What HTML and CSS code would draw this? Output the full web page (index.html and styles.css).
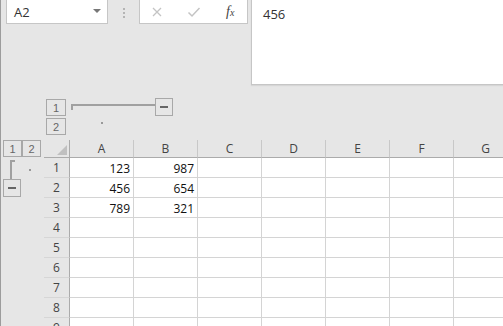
FILE: index.html
```html
<!DOCTYPE html>
<html lang="en">
<head>
    <meta charset="UTF-8">
    <title>Sheet</title>
    <link rel="stylesheet" href="styles.css">
</head>
<body>
<div class="app">

    <div class="formula-bar">
        <div class="name-box">
            <span>A2</span>
            <span class="caret"></span>
        </div>
        <div class="grip"><i></i><i></i><i></i></div>
        <div class="fx-box">
            <svg class="fx-icon" width="12" height="12" viewBox="0 0 12 12"><path d="M2 2 L10 10 M10 2 L2 10" stroke="#c4c4c4" stroke-width="1.3" fill="none"/></svg>
            <svg class="fx-icon" width="14" height="12" viewBox="0 0 14 12"><path d="M1.5 6.5 L5 10 L12.5 2" stroke="#c4c4c4" stroke-width="1.5" fill="none"/></svg>
            <span class="fx">f<sub>x</sub></span>
        </div>
        <div class="formula-input">456</div>
    </div>

    <div class="col-outline">
        <div class="levels">
            <div class="lvl">1</div>
            <div class="lvl">2</div>
        </div>
        <div class="col-group">
            <div class="col-group-top">
                <div class="col-line"></div>
                <div class="minus"></div>
            </div>
            <div class="detail-dot"></div>
        </div>
    </div>

    <div class="sheet">
        <div class="row-levels">
            <div class="lvl">1</div>
            <div class="lvl">2</div>
        </div>
        <div class="corner"></div>
        <div class="ch">A</div>
        <div class="ch">B</div>
        <div class="ch">C</div>
        <div class="ch">D</div>
        <div class="ch">E</div>
        <div class="ch">F</div>
        <div class="ch">G</div>

        <div class="row-group">
            <div class="row-group-top">
                <div class="row-line"></div>
                <div class="detail-dot"></div>
            </div>
            <div class="minus"></div>
        </div>
        <div class="rh">1</div>
        <div class="c num">123</div><div class="c num">987</div><div class="c"></div><div class="c"></div><div class="c"></div><div class="c"></div><div class="c"></div>
        <div class="rh">2</div>
        <div class="c num">456</div><div class="c num">654</div><div class="c"></div><div class="c"></div><div class="c"></div><div class="c"></div><div class="c"></div>

        <div class="ro"></div><div class="rh">3</div>
        <div class="c num">789</div><div class="c num">321</div><div class="c"></div><div class="c"></div><div class="c"></div><div class="c"></div><div class="c"></div>
        <div class="ro"></div><div class="rh">4</div>
        <div class="c"></div><div class="c"></div><div class="c"></div><div class="c"></div><div class="c"></div><div class="c"></div><div class="c"></div>
        <div class="ro"></div><div class="rh">5</div>
        <div class="c"></div><div class="c"></div><div class="c"></div><div class="c"></div><div class="c"></div><div class="c"></div><div class="c"></div>
        <div class="ro"></div><div class="rh">6</div>
        <div class="c"></div><div class="c"></div><div class="c"></div><div class="c"></div><div class="c"></div><div class="c"></div><div class="c"></div>
        <div class="ro"></div><div class="rh">7</div>
        <div class="c"></div><div class="c"></div><div class="c"></div><div class="c"></div><div class="c"></div><div class="c"></div><div class="c"></div>
        <div class="ro"></div><div class="rh">8</div>
        <div class="c"></div><div class="c"></div><div class="c"></div><div class="c"></div><div class="c"></div><div class="c"></div><div class="c"></div>
        <div class="ro"></div><div class="rh">9</div>
        <div class="c"></div><div class="c"></div><div class="c"></div><div class="c"></div><div class="c"></div><div class="c"></div><div class="c"></div>
    </div>

</div>
</body>
</html>
```

FILE: styles.css
```css
html, body {
    margin: 0;
    padding: 0;
    height: 100%;
    overflow: hidden;
    background-color: #e6e6e6;
    font-family: "Open Sans", "Liberation Sans", sans-serif;
}

.app {
    border-left: 1px solid #9c9c9c;
    height: 100%;
    box-sizing: border-box;
}

/* formula bar */

.formula-bar {
    display: flex;
    align-items: flex-start;
    height: 86px;
}

.name-box {
    box-sizing: border-box;
    width: 102px;
    height: 25px;
    margin-left: 5px;
    margin-top: -1px;
    background-color: #fff;
    border: 1px solid #c6c6c6;
    display: flex;
    align-items: center;
    justify-content: space-between;
    padding: 1px 6px 0 7px;
    font-size: 13px;
    color: #333;
}

.caret {
    width: 0;
    height: 0;
    border-left: 4px solid transparent;
    border-right: 4px solid transparent;
    border-top: 4px solid #777;
    margin-top: -2px;
}

.grip {
    width: 31px;
    display: flex;
    flex-direction: column;
    align-items: center;
    gap: 2px;
    padding-top: 8px;
}

.grip i {
    width: 2px;
    height: 2px;
    background-color: #b4b4b4;
}

.fx-box {
    box-sizing: border-box;
    width: 109px;
    height: 25px;
    margin-top: -1px;
    background-color: #fff;
    border: 1px solid #c6c6c6;
    display: flex;
    align-items: center;
    padding: 0 11px 0 11px;
    gap: 24px;
}

.fx {
    font-family: "Liberation Serif", serif;
    font-style: italic;
    font-size: 14px;
    color: #444;
    margin-left: 1px;
}

.fx sub {
    font-size: 10px;
    vertical-align: 0;
}

.formula-input {
    box-sizing: border-box;
    flex: 1;
    height: 86px;
    margin-left: 3px;
    margin-top: -1px;
    background-color: #fff;
    border: 1px solid #c6c6c6;
    border-right: none;
    padding: 5px 11px;
    font-size: 13px;
    color: #333;
    box-shadow: 0 1px 1px #d6d6d6;
}

/* outline buttons */

.lvl {
    box-sizing: border-box;
    width: 20px;
    height: 17px;
    border: 1px solid #a8a8a8;
    font-size: 11px;
    color: #666;
    display: flex;
    align-items: center;
    justify-content: center;
    font-family: "Liberation Sans", sans-serif;
}

.minus {
    box-sizing: border-box;
    width: 18px;
    height: 18px;
    border: 1px solid #a8a8a8;
    display: flex;
    align-items: center;
    justify-content: center;
}

.minus::after {
    content: "";
    width: 8px;
    height: 2px;
    background-color: #666;
}

.detail-dot {
    width: 2px;
    height: 2px;
    background-color: #999;
}

.col-outline {
    display: flex;
    height: 54px;
    box-sizing: border-box;
    padding: 13px 0 0 45px;
}

.levels {
    display: flex;
    flex-direction: column;
    gap: 2px;
}

.col-group {
    margin-left: 5px;
    display: flex;
    flex-direction: column;
}

.col-group-top {
    display: flex;
    align-items: flex-start;
    margin-top: -1px;
}

.col-line {
    box-sizing: border-box;
    width: 84px;
    height: 6px;
    margin-top: 6px;
    border-top: 2px solid #a0a0a0;
    border-left: 2px solid #a0a0a0;
}

.col-group .detail-dot {
    margin: 6px 0 0 30px;
}

/* sheet grid */

.sheet {
    display: grid;
    grid-template-columns: 43px 26px repeat(7, 64px);
    grid-template-rows: 18px;
    grid-auto-rows: 20px;
}

.row-levels {
    display: flex;
    padding-left: 2px;
}

.row-levels .lvl {
    width: 19px;
}

.corner {
    position: relative;
    border-bottom: 1px solid #ababab;
    border-right: 1px solid #ababab;
}

.corner::after {
    content: "";
    position: absolute;
    right: 2px;
    bottom: 2px;
    width: 0;
    height: 0;
    border-left: 10px solid transparent;
    border-bottom: 10px solid #c0c0c0;
}

.ch {
    border-bottom: 1px solid #ababab;
    border-right: 1px solid #c8c8c8;
    display: flex;
    align-items: center;
    justify-content: center;
    font-size: 12px;
    color: #444;
}

.row-group {
    grid-row: span 2;
    display: flex;
    flex-direction: column;
    padding: 2px 0 0 2px;
}

.row-group-top {
    display: flex;
    height: 19px;
}

.row-line {
    box-sizing: border-box;
    width: 5px;
    height: 19px;
    margin-left: 7px;
    border-left: 2px solid #a0a0a0;
    border-top: 2px solid #a0a0a0;
}

.row-group .detail-dot {
    margin: 9px 0 0 14px;
}

.rh {
    border-right: 1px solid #ababab;
    border-bottom: 1px solid #d6d6d6;
    display: flex;
    align-items: center;
    justify-content: center;
    font-size: 12px;
    color: #444;
}

.c {
    background-color: #fff;
    border-right: 1px solid #d4d4d4;
    border-bottom: 1px solid #d4d4d4;
    font-size: 12px;
    color: #111;
    display: flex;
    align-items: center;
    padding: 1px 3px 0;
}

.num {
    justify-content: flex-end;
}
```
